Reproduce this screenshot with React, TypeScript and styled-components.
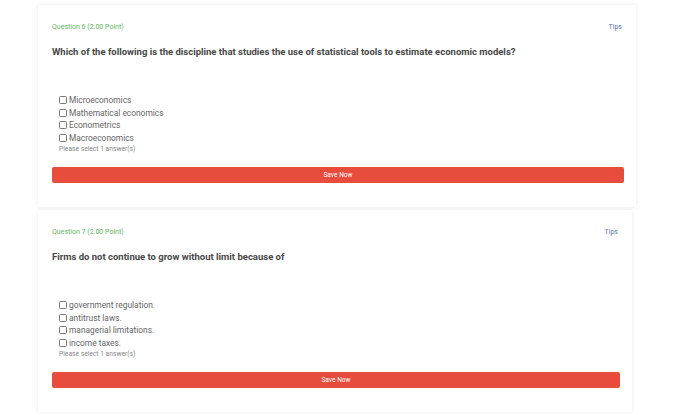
import React from "react";
import styled, { createGlobalStyle } from "styled-components";

const Global = createGlobalStyle`
  html, body { margin: 0; padding: 0; background: #ffffff; }
  body { font-family: Roboto, "Noto Sans", Arial, sans-serif; }
`;

const Page = styled.div`
  width: 700px;
  height: 415px;
  overflow: hidden;
  padding: 5px 0 0 38px;
  box-sizing: border-box;
  display: flex;
  flex-direction: column;
  gap: 3px;
`;

const Card = styled.div<{ $w: number }>`
  width: ${(p) => p.$w}px;
  box-sizing: border-box;
  background: #fff;
  box-shadow: 0 0 4px rgba(0, 0, 0, 0.09);
  padding: 17px 12px 24px 14px;
  display: flex;
  flex-direction: column;
`;

const Header = styled.div`
  display: flex;
  justify-content: space-between;
  align-items: center;
  height: 10px;
`;

const Points = styled.span`
  font-size: 7px;
  color: #62b862;
`;

const Tips = styled.span`
  font-size: 7px;
  color: #5a74b8;
  margin-right: 2px;
`;

const QuestionText = styled.div`
  margin-top: 14px;
  font-size: 9.5px;
  font-weight: 700;
  color: #474747;
  line-height: 12px;
`;

const Options = styled.div`
  margin-top: 36px;
  display: flex;
  flex-direction: column;
  padding-left: 7px;
`;

const OptionRow = styled.label`
  display: flex;
  align-items: center;
  height: 12.5px;
  font-size: 8.4px;
  color: #666;
`;

const Box = styled.span`
  width: 6px;
  height: 6px;
  border: 1px solid #777;
  border-radius: 1.5px;
  margin-right: 2px;
  flex-shrink: 0;
`;

const Hint = styled.div`
  font-size: 6.7px;
  color: #888;
  height: 12px;
  line-height: 11px;
`;

const SaveButton = styled.button`
  margin-top: 11px;
  height: 16px;
  border: none;
  border-radius: 2px;
  background: #e74c3c;
  color: #fff;
  font-family: Roboto, "Noto Sans", Arial, sans-serif;
  font-size: 6.6px;
  padding: 0;
  cursor: pointer;
`;

type Q = { title: string; text: string; options: string[]; w: number };

const questions: Q[] = [
  {
    title: "Question 6 (2.00 Point)",
    text: "Which of the following is the discipline that studies the use of statistical tools to estimate economic models?",
    options: ["Microeconomics", "Mathematical economics", "Econometrics", "Macroeconomics"],
    w: 598,
  },
  {
    title: "Question 7 (2.00 Point)",
    text: "Firms do not continue to grow without limit because of",
    options: ["government regulation.", "antitrust laws.", "managerial limitations.", "income taxes."],
    w: 594,
  },
];

export default function App() {
  return (
    <>
      <Global />
      <Page>
        {questions.map((q) => (
          <Card key={q.title} $w={q.w}>
            <Header>
              <Points>{q.title}</Points>
              <Tips>Tips</Tips>
            </Header>
            <QuestionText>{q.text}</QuestionText>
            <Options>
              {q.options.map((o) => (
                <OptionRow key={o}>
                  <Box />
                  {o}
                </OptionRow>
              ))}
              <Hint>Please select 1 answer(s)</Hint>
            </Options>
            <SaveButton>Save Now</SaveButton>
          </Card>
        ))}
      </Page>
    </>
  );
}
